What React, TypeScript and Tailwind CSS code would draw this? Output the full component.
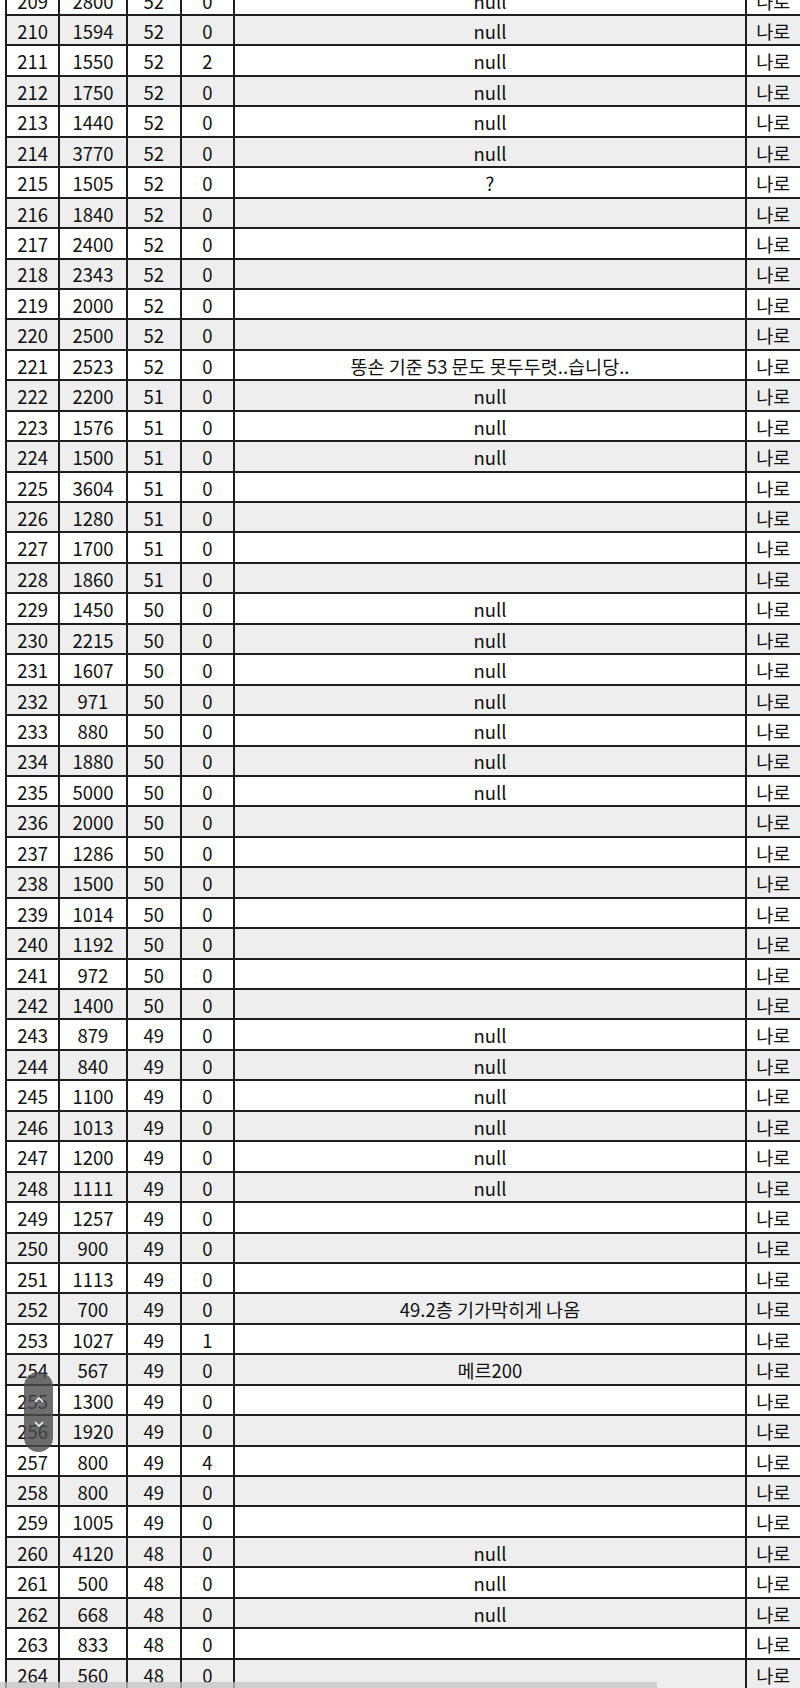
import React from "react";

type Row = [number, number, number, number, string];

const rows: Row[] = [
  [209, 2800, 52, 0, "null"],
  [210, 1594, 52, 0, "null"],
  [211, 1550, 52, 2, "null"],
  [212, 1750, 52, 0, "null"],
  [213, 1440, 52, 0, "null"],
  [214, 3770, 52, 0, "null"],
  [215, 1505, 52, 0, "?"],
  [216, 1840, 52, 0, ""],
  [217, 2400, 52, 0, ""],
  [218, 2343, 52, 0, ""],
  [219, 2000, 52, 0, ""],
  [220, 2500, 52, 0, ""],
  [221, 2523, 52, 0, "똥손 기준 53 문도 못두두렷..습니당.."],
  [222, 2200, 51, 0, "null"],
  [223, 1576, 51, 0, "null"],
  [224, 1500, 51, 0, "null"],
  [225, 3604, 51, 0, ""],
  [226, 1280, 51, 0, ""],
  [227, 1700, 51, 0, ""],
  [228, 1860, 51, 0, ""],
  [229, 1450, 50, 0, "null"],
  [230, 2215, 50, 0, "null"],
  [231, 1607, 50, 0, "null"],
  [232, 971, 50, 0, "null"],
  [233, 880, 50, 0, "null"],
  [234, 1880, 50, 0, "null"],
  [235, 5000, 50, 0, "null"],
  [236, 2000, 50, 0, ""],
  [237, 1286, 50, 0, ""],
  [238, 1500, 50, 0, ""],
  [239, 1014, 50, 0, ""],
  [240, 1192, 50, 0, ""],
  [241, 972, 50, 0, ""],
  [242, 1400, 50, 0, ""],
  [243, 879, 49, 0, "null"],
  [244, 840, 49, 0, "null"],
  [245, 1100, 49, 0, "null"],
  [246, 1013, 49, 0, "null"],
  [247, 1200, 49, 0, "null"],
  [248, 1111, 49, 0, "null"],
  [249, 1257, 49, 0, ""],
  [250, 900, 49, 0, ""],
  [251, 1113, 49, 0, ""],
  [252, 700, 49, 0, "49.2층 기가막히게 나옴"],
  [253, 1027, 49, 1, ""],
  [254, 567, 49, 0, "메르200"],
  [255, 1300, 49, 0, ""],
  [256, 1920, 49, 0, ""],
  [257, 800, 49, 4, ""],
  [258, 800, 49, 0, ""],
  [259, 1005, 49, 0, ""],
  [260, 4120, 48, 0, "null"],
  [261, 500, 48, 0, "null"],
  [262, 668, 48, 0, "null"],
  [263, 833, 48, 0, ""],
  [264, 560, 48, 0, ""],
];

const cell = "flex items-center justify-center border-r-2 border-[#1e1e1e] shrink-0 pt-[2px]";

export default function App() {
  return (
    <div
      className="relative h-[1688px] w-[800px] overflow-hidden bg-white text-[18.5px] text-[#111]"
      style={{ fontFamily: '"Noto Sans CJK KR", "Noto Sans", sans-serif' }}
    >
      {/* list scrolled so that row 209 is half out of view */}
      <div className="-mt-[14.44px] pl-[5px]">
        {rows.map(([no, score, floor, count, memo]) => (
          <div
            key={no}
            className={`flex h-[30.44px] border-b-2 border-l-2 border-[#1e1e1e] leading-none ${
              no % 2 === 0 ? "bg-[#eeeeee]" : "bg-white"
            }`}
          >
            <div className={`${cell} w-[53.3px]`}>{no}</div>
            <div className={`${cell} w-[67.4px]`}>{score}</div>
            <div className={`${cell} w-[54px]`}>{floor}</div>
            <div className={`${cell} w-[53.6px]`}>{count}</div>
            <div className={`${cell} w-[511.4px]`}>{memo}</div>
            <div className={`${cell} w-[55.3px]`}>나로</div>
          </div>
        ))}
      </div>

      {/* fast-scroll thumb */}
      <div className="absolute left-[24px] top-[1372px] flex h-[80px] w-[29px] flex-col items-center justify-center gap-[18px] rounded-full bg-[#4a4a4a]/80">
        <svg width="10" height="6" viewBox="0 0 10 6" fill="none" stroke="white" strokeWidth="1.5">
          <path d="M1 5 L5 1 L9 5" />
        </svg>
        <svg width="10" height="6" viewBox="0 0 10 6" fill="none" stroke="white" strokeWidth="1.5">
          <path d="M1 1 L5 5 L9 1" />
        </svg>
      </div>

      {/* horizontal scrollbar */}
      <div className="absolute bottom-0 left-0 h-[6px] w-[657px] bg-[#c4c4c4]/75" />
    </div>
  );
}
